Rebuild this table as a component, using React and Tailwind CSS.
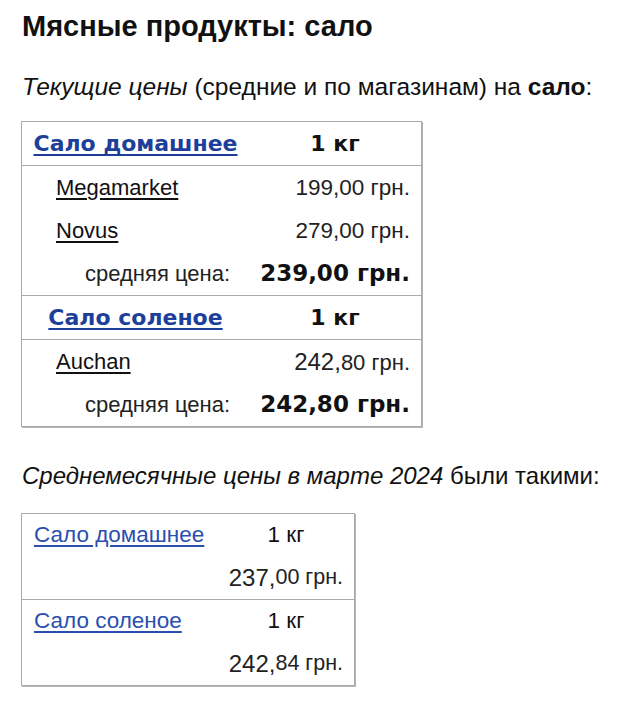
import React from 'react';

const arial = "font-['Liberation_Sans',Arial,sans-serif]";
const verdana = "font-['DejaVu_Sans',Verdana,sans-serif]";

const groups = [
  {
    name: 'Сало домашнее',
    stores: [
      { name: 'Megamarket', price: '199,00', split: false },
      { name: 'Novus', price: '279,00', split: false },
    ],
    avg: '239,00 грн.',
  },
  {
    name: 'Сало соленое',
    stores: [{ name: 'Auchan', price: '242,80', split: true }],
    avg: '242,80 грн.',
  },
];

const monthly = [
  { name: 'Сало домашнее', whole: '237', cents: '00' },
  { name: 'Сало соленое', whole: '242', cents: '84' },
];

const Price = ({ price, split }) => {
  if (!split) return <span className="text-[22.5px]">{price} грн.</span>;
  const [whole, cents] = price.split(',');
  return (
    <span>
      <span className="text-[24px]">{whole},</span>
      <span className="text-[22px]">{cents} грн.</span>
    </span>
  );
};

export default function App() {
  return (
    <div className={`${arial} bg-white text-[#111] pl-[22px] pt-[6px] pb-6 min-h-[710px]`}>
      <h1 className="text-[29px] font-bold leading-[40px]">Мясные продукты: сало</h1>

      <p className="text-[24.5px] leading-[30px] mt-[26px]">
        <i>Текущие цены</i> (средние и по магазинам) на <b>сало</b>:
      </p>

      <div className="w-[401px] mt-[19px] -ml-px border border-[#aaa] shadow-[1px_1px_0_#b5b5b5]">
        {groups.map((g, gi) => (
          <div key={g.name} className={gi > 0 ? 'border-t border-[#aaa]' : ''}>
            <div className={`flex h-[44px] items-center border-b border-[#aaa] ${verdana} font-bold text-[22px]`}>
              <div className="w-[227px] text-center">
                <a href="#" className="text-[#1d3f9a] underline underline-offset-[3px]">{g.name}</a>
              </div>
              <div className="flex-1 text-center">1 кг</div>
            </div>
            {g.stores.map((s) => (
              <div key={s.name} className="flex h-[43px] items-center">
                <div className="w-[227px] pl-[34px] text-[22px]">
                  <a href="#" className="underline underline-offset-[3px]">{s.name}</a>
                </div>
                <div className="flex-1 text-right pr-[11px] text-[#222]">
                  <Price price={s.price} split={s.split} />
                </div>
              </div>
            ))}
            <div className="flex h-[43px] items-center">
              <div className="w-[227px] text-right pr-[19px] text-[22px] text-[#222]">средняя цена:</div>
              <div className={`flex-1 text-right pr-[11px] ${verdana} font-bold text-[23px]`}>{g.avg}</div>
            </div>
          </div>
        ))}
      </div>

      <p className="text-[24px] leading-[30px] mt-[34px]">
        <i>Среднемесячные цены в марте 2024</i> были такими:
      </p>

      <div className="w-[334px] mt-[22px] -ml-px border border-[#aaa] shadow-[1px_1px_0_#b5b5b5]">
        {monthly.map((m, i) => (
          <div key={m.name} className={i > 0 ? 'border-t border-[#aaa]' : ''}>
            <div className="flex h-[42px] items-center text-[22.5px]">
              <div className="w-[196px] pl-[12px]">
                <a href="#" className="text-[#2b4eaf] underline underline-offset-[3px]">{m.name}</a>
              </div>
              <div className="flex-1 text-center">1 кг</div>
            </div>
            <div className="flex h-[43px] items-center justify-end pr-[11px] text-[#222]">
              <span className="text-[24px]">{m.whole},</span>
              <span className="text-[21.5px]">{m.cents} грн.</span>
            </div>
          </div>
        ))}
      </div>
    </div>
  );
}
